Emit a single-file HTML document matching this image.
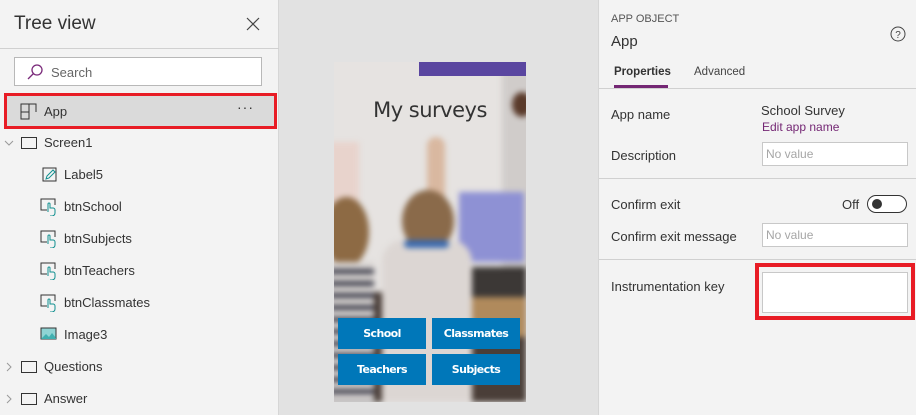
<!DOCTYPE html>
<html><head><meta charset="utf-8"><style>
*{margin:0;padding:0;box-sizing:border-box}
body{width:916px;height:415px;overflow:hidden;background:#e2e2e2;font-family:"Liberation Sans",sans-serif;color:#333;position:relative}
.abs{position:absolute}
#left{left:0;top:0;width:279px;height:415px;background:#f3f3f3;border-right:1px solid #d6d6d6}
#right{left:598px;top:0;width:318px;height:415px;background:#f3f3f3;border-left:1px solid #d6d6d6}
.row{position:absolute;font-size:13px;color:#333;line-height:16px}
.t{font-size:13px;color:#333}
.inp{position:absolute;background:#fff;border:1px solid #c8c8c8;font-size:12px;color:#a6a6a6;padding:3px 3px;line-height:16px}
.btn{position:absolute;background:#0077b9;color:#fff;font:bold 11px "DejaVu Sans",sans-serif;display:flex;align-items:center;justify-content:center;letter-spacing:-.6px}
</style></head><body>
<div id="left" class="abs">
 <div class="abs" style="left:14px;top:13px;font-size:19px;color:#333">Tree view</div>
 <svg class="abs" style="left:246px;top:17px" width="14" height="14"><path d="M1 1L13 13M13 1L1 13" stroke="#444" stroke-width="1.2"/></svg>
 <div class="abs" style="left:0;top:48px;width:279px;height:1px;background:#d0d0d0"></div>
 <div class="abs" style="left:14px;top:57px;width:248px;height:29px;background:#fff;border:1px solid #b8b8b8"></div>
 <svg class="abs" style="left:26px;top:63px" width="18" height="18"><circle cx="11" cy="7" r="5" fill="none" stroke="#7a2a7a" stroke-width="1.3"/><path d="M7.5 10.5L2 16" stroke="#7a2a7a" stroke-width="1.3"/></svg>
 <div class="abs t" style="left:51px;top:65px;color:#666">Search</div>
 <div class="abs" style="left:4px;top:93px;width:273px;height:36px;border:3px solid #e81c25;background:#dadada"></div>
 <svg class="abs" style="left:20px;top:103px" width="18" height="18"><path d="M1 1H9V9H1ZM9 1H16V9M1 9V16H9V9" fill="none" stroke="#333"/></svg>
 <div class="row" style="left:44px;top:104px">App</div>
 <div class="abs" style="left:237px;top:99px;font-size:14px;letter-spacing:1px;color:#333">···</div>
 <svg class="abs" style="left:4px;top:139px" width="10" height="8"><path d="M1 2L5 6L9 2" fill="none" stroke="#999"/></svg>
 <div class="abs" style="left:21px;top:137px;width:16px;height:12px;border:1px solid #333"></div>
 <div class="row" style="left:44px;top:135px">Screen1</div>
 <svg class="abs" style="left:42px;top:167px" width="16" height="16"><rect x="1" y="1" width="13" height="13" fill="none" stroke="#333"/><path d="M4 12L5 9L11 3L13 5L7 11Z" fill="none" stroke="#0f8f8f"/></svg>
 <div class="row" style="left:64px;top:167px">Label5</div>
 <svg class="abs" style="left:40px;top:326px" width="17" height="15"><rect x="1" y="2" width="15" height="11" fill="#8fd4d4" stroke="#333"/><path d="M1 13L6 8L9 11L12 7L16 12V13Z" fill="#40b0b0"/></svg>
 <div class="row" style="left:64px;top:327px">Image3</div>
 <svg class="abs" style="left:5px;top:362px" width="8" height="10"><path d="M2 1L6 5L2 9" fill="none" stroke="#999"/></svg>
 <div class="abs" style="left:21px;top:361px;width:16px;height:12px;border:1px solid #333"></div>
 <div class="row" style="left:44px;top:359px">Questions</div>
 <svg class="abs" style="left:5px;top:394px" width="8" height="10"><path d="M2 1L6 5L2 9" fill="none" stroke="#999"/></svg>
 <div class="abs" style="left:21px;top:393px;width:16px;height:12px;border:1px solid #333"></div>
 <div class="row" style="left:44px;top:391px">Answer</div>
</div>
<svg class="abs" style="left:40px;top:198px" width="18" height="18"><path d="M7 12H1V1H15V7" fill="none" stroke="#333"/><path d="M8 14V6a1 1 0 0 1 2 0V10H13a2 2 0 0 1 2 2V15a3 3 0 0 1-3 3H10" fill="none" stroke="#0f8f8f"/></svg>
<div class="row" style="left:64px;top:199px">btnSchool</div>
<svg class="abs" style="left:40px;top:230px" width="18" height="18"><path d="M7 12H1V1H15V7" fill="none" stroke="#333"/><path d="M8 14V6a1 1 0 0 1 2 0V10H13a2 2 0 0 1 2 2V15a3 3 0 0 1-3 3H10" fill="none" stroke="#0f8f8f"/></svg>
<div class="row" style="left:64px;top:231px">btnSubjects</div>
<svg class="abs" style="left:40px;top:262px" width="18" height="18"><path d="M7 12H1V1H15V7" fill="none" stroke="#333"/><path d="M8 14V6a1 1 0 0 1 2 0V10H13a2 2 0 0 1 2 2V15a3 3 0 0 1-3 3H10" fill="none" stroke="#0f8f8f"/></svg>
<div class="row" style="left:64px;top:263px">btnTeachers</div>
<svg class="abs" style="left:40px;top:294px" width="18" height="18"><path d="M7 12H1V1H15V7" fill="none" stroke="#333"/><path d="M8 14V6a1 1 0 0 1 2 0V10H13a2 2 0 0 1 2 2V15a3 3 0 0 1-3 3H10" fill="none" stroke="#0f8f8f"/></svg>
<div class="row" style="left:64px;top:295px">btnClassmates</div>

<div class="abs" style="left:334px;top:62px;width:192px;height:340px;overflow:hidden;background:#e6e3e1">
 <div class="abs" style="left:0;top:0;width:192px;height:340px;filter:blur(3px)">
  <div class="abs" style="left:-5px;top:80px;width:30px;height:90px;background:#e8d3cc"></div>
  <div class="abs" style="left:168px;top:0;width:30px;height:340px;background:#d0ccca"></div>
  <div class="abs" style="left:0;top:230px;width:192px;height:110px;background:#4a3e38"></div>
  <div class="abs" style="left:125px;top:130px;width:65px;height:70px;background:#8e91d4"></div>
  <div class="abs" style="left:115px;top:205px;width:77px;height:30px;background:#3c3836"></div>
  <div class="abs" style="left:130px;top:235px;width:62px;height:40px;background:#b08a5c"></div>
  <div class="abs" style="left:-10px;top:135px;width:45px;height:70px;border-radius:50%;background:#8d6a44"></div>
  <div class="abs" style="left:-5px;top:200px;width:45px;height:140px;background:repeating-linear-gradient(180deg,#d8d4d2 0 7px,#3a3a48 7px 12px)"></div>
  <div class="abs" style="left:93px;top:75px;width:18px;height:110px;border-radius:9px;background:#d9b8a0"></div>
  <div class="abs" style="left:68px;top:128px;width:52px;height:62px;border-radius:50%;background:#8a6a4a"></div>
  <div class="abs" style="left:48px;top:178px;width:90px;height:162px;border-radius:22px 22px 0 0;background:#dcd6d3"></div>
  <div class="abs" style="left:70px;top:178px;width:45px;height:8px;border-radius:4px;background:#3a6ab0"></div>
  <div class="abs" style="left:178px;top:30px;width:20px;height:25px;border-radius:50%;background:#5a3a2a"></div>
 </div>
 <div class="abs" style="left:85px;top:0;width:107px;height:14px;background:#5a46a0"></div>
 <div class="abs" style="left:0;top:36px;width:192px;text-align:center;font:21px 'DejaVu Sans',sans-serif;color:#333;letter-spacing:-.5px">My surveys</div>
 <div class="btn" style="left:4px;top:256px;width:88px;height:31px">School</div>
 <div class="btn" style="left:98px;top:256px;width:88px;height:31px">Classmates</div>
 <div class="btn" style="left:4px;top:292px;width:88px;height:31px">Teachers</div>
 <div class="btn" style="left:98px;top:292px;width:88px;height:31px">Subjects</div>
</div>

<div id="right" class="abs">
 <div class="abs" style="left:12px;top:13px;font-size:11px;color:#555">APP OBJECT</div>
 <div class="abs" style="left:12px;top:33px;font-size:15px;color:#333">App</div>
 <svg class="abs" style="left:291px;top:26px" width="16" height="16"><circle cx="8" cy="8" r="7" fill="none" stroke="#444"/><text x="8" y="12" text-anchor="middle" font-size="10" font-family="Liberation Sans" fill="#444">?</text></svg>
 <div class="abs" style="left:15px;top:66px;font-size:11.5px;font-weight:bold;color:#333">Properties</div>
 <div class="abs" style="left:95px;top:66px;font-size:11.5px;color:#444">Advanced</div>
 <div class="abs" style="left:15px;top:85px;width:54px;height:3px;background:#742774"></div>
 <div class="abs" style="left:0;top:88px;width:318px;height:1px;background:#d0d0d0"></div>
 <div class="abs t" style="left:12px;top:107px">App name</div>
 <div class="abs t" style="left:162px;top:103px">School Survey</div>
 <div class="abs" style="left:163px;top:120px;font-size:12px;color:#742774">Edit app name</div>
 <div class="abs t" style="left:12px;top:148px">Description</div>
 <div class="inp" style="left:163px;top:142px;width:146px;height:24px">No value</div>
 <div class="abs" style="left:0;top:178px;width:318px;height:1px;background:#d0d0d0"></div>
 <div class="abs t" style="left:12px;top:197px">Confirm exit</div>
 <div class="abs t" style="left:243px;top:197px">Off</div>
 <div class="abs" style="left:268px;top:195px;width:40px;height:18px;border:1px solid #333;border-radius:9px;background:#fff"></div>
 <div class="abs" style="left:273px;top:199px;width:10px;height:10px;border-radius:50%;background:#333"></div>
 <div class="abs t" style="left:12px;top:229px">Confirm exit message</div>
 <div class="inp" style="left:163px;top:223px;width:146px;height:24px">No value</div>
 <div class="abs" style="left:0;top:259px;width:318px;height:1px;background:#d0d0d0"></div>
 <div class="abs t" style="left:12px;top:279px">Instrumentation key</div>
 <div class="abs" style="left:156px;top:263px;width:160px;height:57px;border:4px solid #e81c25"></div>
 <div class="inp" style="left:163px;top:272px;width:146px;height:41px"></div>
</div>
</body></html>
